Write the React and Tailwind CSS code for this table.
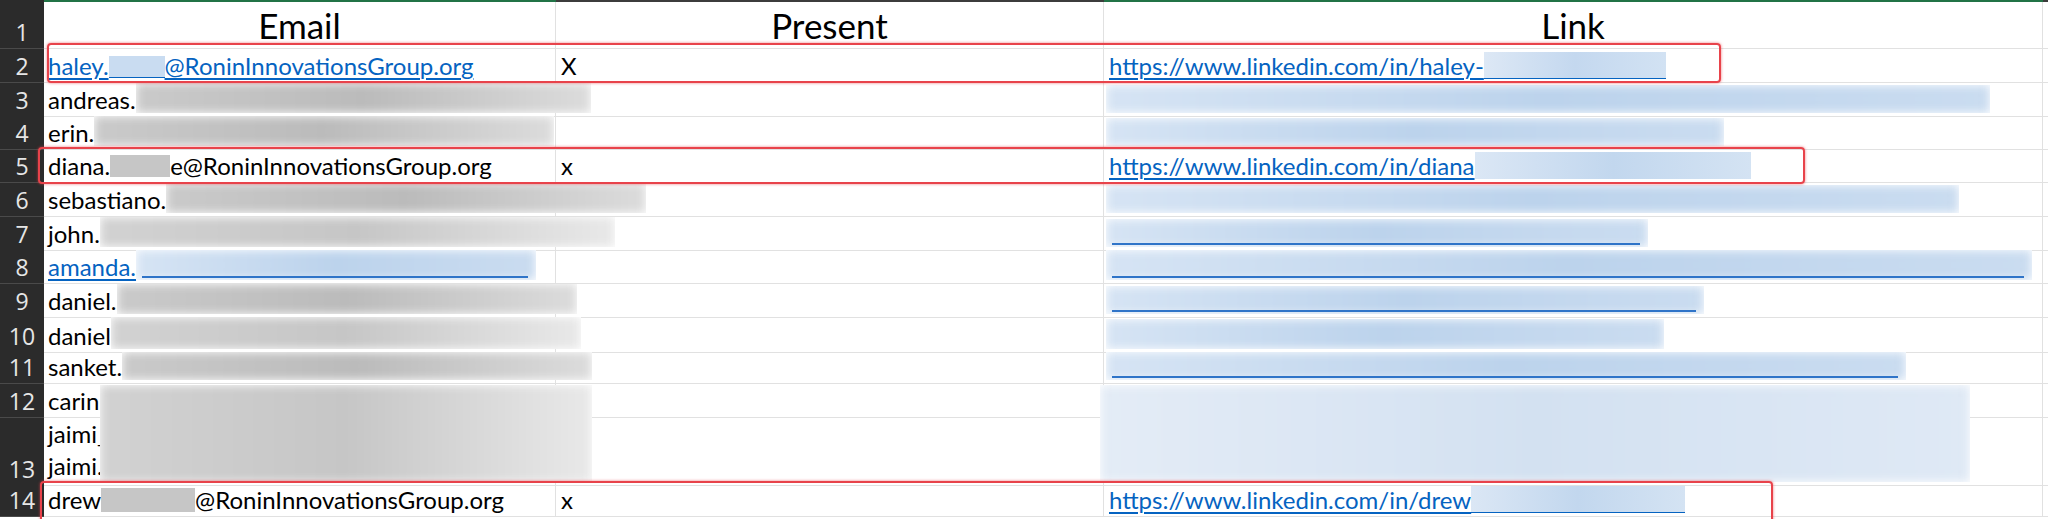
import React from "react";

const COLS = "grid grid-cols-[44px_512px_548px_939px_1fr]";
const FONT = "font-['Lato','Liberation_Sans',sans-serif]";
const LINK = "text-[#0563c1] underline decoration-[1.5px] underline-offset-[3px]";

// blurred redaction patch
const Smudge = ({ className, tone = "gray", line }) => {
  const fill =
    tone === "blue"
      ? "bg-linear-to-r from-[#d6e4f4] via-[#bcd3ec] to-[#cadcf0]"
      : tone === "pale"
      ? "bg-linear-to-r from-[#e4ecf6] via-[#d3e1f1] to-[#dfe9f5]"
      : tone === "fog"
      ? "bg-linear-to-r from-[#d2d2d2] via-[#c6c6c6] to-[#e9e9e9]"
      : "bg-linear-to-r from-[#cacaca] via-[#bbbbbb] to-[#dcdcdc]";
  return (
    <span className={`relative z-10 block shrink-0 overflow-hidden bg-white ${className}`}>
      <span className={`block h-full w-full ${fill} blur-[5px]`} />
      {line && <span className="absolute bottom-[2px] left-[6px] right-[8px] h-[2px] bg-[#2f74c8]" />}
    </span>
  );
};

const Num = ({ n }) => (
  <div className="flex items-end justify-center border-b border-[#4a4a4a] bg-[#2b2b2b] pb-[3px] font-['Open_Sans',sans-serif] text-[23px] leading-[26px] text-[#e6e6e6]">
    {n}
  </div>
);

const Cell = ({ children, className = "" }) => (
  <div
    className={`flex items-end overflow-visible whitespace-nowrap border-r border-b border-[#e1e1e1] pb-[3px] text-[24px] leading-[26px] text-black ${className}`}
  >
    {children}
  </div>
);

const Row = ({ n, a, b, c, h = "h-[33.5px]" }) => (
  <div className={`${COLS} ${h}`}>
    <Num n={n} />
    <Cell className="pl-[4px]">{a}</Cell>
    <Cell className="pl-[5px]">{b}</Cell>
    <Cell className="pl-[5px]">{c}</Cell>
    <div className="border-b border-[#e1e1e1]" />
  </div>
);

const Box = ({ className }) => <span className={`block shrink-0 ${className}`} />;

const Mark = ({ className }) => (
  <div
    className={`absolute z-20 rounded-[4px] border-[2.5px] border-[#e8434b] shadow-[0_0_3px_rgba(232,67,75,0.7)] ${className}`}
  />
);

export default function App() {
  return (
    <div className={`relative h-[519px] w-[2048px] overflow-hidden bg-white ${FONT}`}>
      {/* top edge of the column header strip */}
      <div className={`${COLS} h-[2px]`}>
        <div className="bg-[#2b2b2b]" />
        <div className="bg-[#217346]" />
        <div className="bg-[#3c3c3c]" />
        <div className="bg-[#217346]" />
        <div className="bg-[#3c3c3c]" />
      </div>

      {/* header row */}
      <div className={`${COLS} h-[47px]`}>
        <Num n={1} />
        <div className="flex items-end justify-center border-r border-b border-[#e1e1e1] pb-[3px] text-[35px] leading-[40px]">Email</div>
        <div className="flex items-end justify-center border-r border-b border-[#e1e1e1] pb-[3px] text-[35px] leading-[40px]">Present</div>
        <div className="flex items-end justify-center border-r border-b border-[#e1e1e1] pb-[3px] text-[35px] leading-[40px]">Link</div>
        <div className="border-b border-[#e1e1e1]" />
      </div>

      <Row
        n={2}
        a={
          <span className={`flex items-end ${LINK}`}>
            <span>haley.</span>
            <span className="mb-[1px] block h-[22px] w-[56px] shrink-0 border-b-[1.5px] border-[#0563c1] bg-[#c9dcf1]" />
            <span>@RoninInnovationsGroup.org</span>
          </span>
        }
        b="X"
        c={
          <span className="flex items-end">
            <span className={LINK}>https://www.linkedin.com/in/haley-</span>
            <Box className="h-[27px] w-[182px] border-b-[1.5px] border-[#0563c1] bg-linear-to-r from-[#dde8f5] via-[#c4d8ef] to-[#d2e2f3]" />
          </span>
        }
      />
      <Row n={3} a={<><span>andreas.</span><Smudge className="h-[30px] w-[455px]" /></>} c={<Smudge tone="blue" className="-ml-[3px] h-[28px] w-[884px]" />} />
      <Row n={4} a={<><span>erin.</span><Smudge className="h-[30px] w-[460px]" /></>} c={<Smudge tone="blue" className="-ml-[3px] h-[28px] w-[618px]" />} />
      <Row
        n={5}
        a={
          <span className="flex items-end">
            <span>diana.</span>
            <Box className="mb-[2px] h-[22px] w-[60px] bg-[#c6c6c6]" />
            <span>e@RoninInnovationsGroup.org</span>
          </span>
        }
        b="x"
        c={
          <span className="flex items-end">
            <span className={LINK}>https://www.linkedin.com/in/diana</span>
            <Box className="h-[27px] w-[276px] bg-linear-to-r from-[#dbe7f5] via-[#c2d7ee] to-[#d4e3f3]" />
          </span>
        }
      />
      <Row n={6} a={<><span>sebastiano.</span><Smudge className="h-[30px] w-[480px]" /></>} c={<Smudge tone="blue" className="-ml-[3px] h-[28px] w-[853px]" />} />
      <Row n={7} a={<><span>john.</span><Smudge tone="fog" className="h-[30px] w-[515px]" /></>} c={<Smudge tone="blue" line className="-ml-[3px] h-[28px] w-[542px]" />} />
      <Row
        n={8}
        a={<><span className={LINK}>amanda.</span><Smudge tone="blue" line className="h-[30px] w-[400px]" /></>}
        c={<Smudge tone="blue" line className="-ml-[3px] h-[30px] w-[926px]" />}
      />
      <Row n={9} a={<><span>daniel.</span><Smudge className="h-[30px] w-[460px]" /></>} c={<Smudge tone="blue" line className="-ml-[3px] h-[28px] w-[598px]" />} />
      <Row n={10} a={<><span>daniel</span><Smudge tone="fog" className="h-[32px] w-[470px]" /></>} c={<Smudge tone="blue" className="-ml-[3px] h-[30px] w-[558px]" />} />
      <Row n={11} a={<><span>sanket.</span><Smudge className="h-[28px] w-[470px]" /></>} c={<Smudge tone="blue" line className="-ml-[3px] h-[28px] w-[800px]" />} />
      <Row n={12} a={<span>carin</span>} c={null} />
      <Row
        n={13}
        h="h-[65.5px]"
        a={
          <span className="flex flex-col leading-[32px]">
            <span>jaimi_</span>
            <span>jaimi.</span>
          </span>
        }
        c={null}
      />
      <Row
        n={14}
        h="h-[34px]"
        a={
          <span className="flex items-end">
            <span>drew</span>
            <Box className="mb-[1px] h-[24px] w-[94px] bg-[#c6c6c6]" />
            <span>@RoninInnovationsGroup.org</span>
          </span>
        }
        b="x"
        c={
          <span className="flex items-end">
            <span className={LINK}>https://www.linkedin.com/in/drew</span>
            <Box className="h-[27px] w-[214px] border-b-[1.5px] border-[#0563c1] bg-linear-to-r from-[#dbe7f5] via-[#c2d7ee] to-[#d4e3f3]" />
          </span>
        }
      />

      {/* redactions spanning rows 12-13 */}
      <div className="absolute left-[100px] top-[385px] z-10 h-[97px] w-[492px]">
        <Smudge tone="fog" className="h-full w-full" />
      </div>
      <div className="absolute left-[1100px] top-[385px] z-10 h-[97px] w-[870px]">
        <Smudge tone="pale" className="h-full w-full" />
      </div>

      {/* red annotation boxes */}
      <Mark className="left-[47px] top-[43px] h-[40px] w-[1674px]" />
      <Mark className="left-[38px] top-[147px] h-[37px] w-[1767px]" />
      <Mark className="left-[40px] top-[481px] h-[60px] w-[1733px]" />
    </div>
  );
}
